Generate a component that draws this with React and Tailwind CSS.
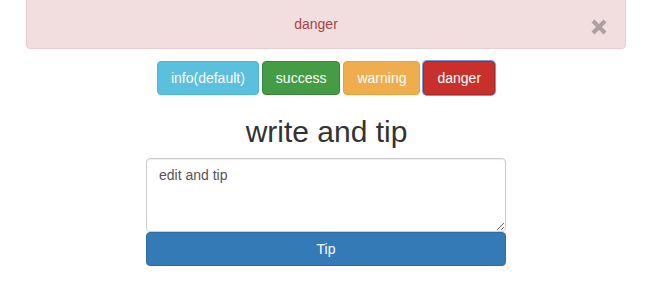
import { useState } from 'react';

const buttons = [
    { label: 'info(default)', cls: 'bg-[#5bc0de] border-[#46b8da]' },
    { label: 'success', cls: 'bg-[#449d44] border-[#398439]' },
    { label: 'warning', cls: 'bg-[#f0ad4e] border-[#eea236]' },
    { label: 'danger', cls: 'bg-[#c9302c] border-[#ac2925] ring-1 ring-[#6f9be0]' },
];

const App = () => {
    const [text, setText] = useState('edit and tip');

    return (
        <div className="relative w-[653px] h-[285px] bg-white overflow-hidden font-['Liberation_Sans',Arial,sans-serif] text-[#333]">
            {/* alert overlay */}
            <div className="absolute left-[26px] top-[-4px] w-[600px] h-[53px] bg-[#f2dede] border border-[#ebccd1] rounded pl-[15px] pr-[35px] flex items-center justify-center text-sm text-[#a94442]">
                <span className="mt-[3px]">danger</span>
                <button className="absolute right-[17px] top-[21px] w-[18px] h-[18px] flex items-center justify-center">
                    <svg width="18" height="18" viewBox="0 0 18 18">
                        <path d="M3 3L15 15M15 3L3 15" stroke="#aca0a3" strokeWidth="4.2" strokeLinecap="butt" />
                    </svg>
                </button>
            </div>

            <div className="flex flex-col items-center pt-[61px]">
                <div className="flex gap-[3px] pr-[1px]">
                    {buttons.map((b) => (
                        <button
                            key={b.label}
                            className={`h-[34px] px-[13px] border rounded text-sm text-white leading-5 ${b.cls}`}
                        >
                            {b.label}
                        </button>
                    ))}
                </div>

                <h2 className="mt-[20px] mb-[10px] text-[30px] leading-[33px] font-normal text-[#333]">write and tip</h2>

                <div className="w-[360px] flex flex-col mr-[1px]">
                    <textarea
                        value={text}
                        onChange={(e) => setText(e.target.value)}
                        rows={3}
                        className="block w-full h-[74px] px-3 py-[6px] text-sm leading-5 text-[#555] bg-white border border-[#ccc] rounded shadow-[inset_0_1px_1px_rgba(0,0,0,0.075)] outline-none"
                    />
                    <button className="h-[34px] w-full bg-[#337ab7] border border-[#2e6da4] rounded text-sm text-white">
                        Tip
                    </button>
                </div>
            </div>
        </div>
    );
};

export default App;
